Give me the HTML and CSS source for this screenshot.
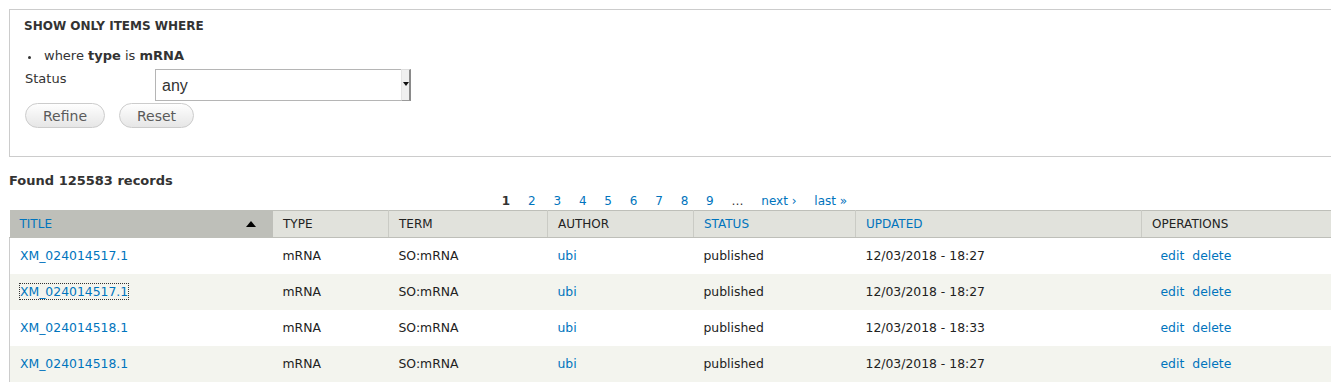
FILE: index.html
```html
<!DOCTYPE html>
<html lang="en">
<head>
    <meta charset="UTF-8">
    <meta name="viewport" content="width=device-width, initial-scale=1.0">
    <title>Content</title>
    <link rel="stylesheet" href="styles.css">
</head>
<body>
    <div class="page">
        <div class="filters">
            <div class="legend">Show only items where</div>
            <ul class="criteria">
                <li>where <b>type</b> is <b>mRNA</b></li>
            </ul>
            <div class="field">
                <label class="field-label" for="status">Status</label>
                <div class="select-wrap">
                    <select id="status" class="select">
                        <option>any</option>
                        <option>published</option>
                        <option>not published</option>
                    </select>
                    <span class="select-arrow"></span>
                </div>
            </div>
            <div class="actions">
                <button class="btn">Refine</button>
                <button class="btn">Reset</button>
            </div>
        </div>

        <div class="found">Found 125583 records</div>

        <ul class="pager">
            <li class="pager-current">1</li>
            <li><a href="#">2</a></li>
            <li><a href="#">3</a></li>
            <li><a href="#">4</a></li>
            <li><a href="#">5</a></li>
            <li><a href="#">6</a></li>
            <li><a href="#">7</a></li>
            <li><a href="#">8</a></li>
            <li><a href="#">9</a></li>
            <li>…</li>
            <li><a href="#">next ›</a></li>
            <li><a href="#">last »</a></li>
        </ul>

        <table class="records">
            <colgroup>
                <col style="width:263px">
                <col style="width:116px">
                <col style="width:159px">
                <col style="width:146px">
                <col style="width:162px">
                <col style="width:286px">
                <col style="width:199px">
            </colgroup>
            <thead>
                <tr>
                    <th class="active"><a href="#">Title</a>
                        <svg class="sort-icon" width="10" height="6" viewBox="0 0 10 6"><path d="M0 6 L5 0 L10 6 Z" fill="#000"/></svg>
                    </th>
                    <th>Type</th>
                    <th>Term</th>
                    <th>Author</th>
                    <th><a href="#">Status</a></th>
                    <th><a href="#">Updated</a></th>
                    <th>Operations</th>
                </tr>
            </thead>
            <tbody>
                <tr>
                    <td><a href="#">XM_024014517.1</a></td>
                    <td>mRNA</td>
                    <td>SO:mRNA</td>
                    <td><a href="#">ubi</a></td>
                    <td>published</td>
                    <td>12/03/2018 - 18:27</td>
                    <td class="ops"><a href="#">edit</a><a href="#">delete</a></td>
                </tr>
                <tr class="even">
                    <td><a href="#" class="focused">XM_024014517.1</a></td>
                    <td>mRNA</td>
                    <td>SO:mRNA</td>
                    <td><a href="#">ubi</a></td>
                    <td>published</td>
                    <td>12/03/2018 - 18:27</td>
                    <td class="ops"><a href="#">edit</a><a href="#">delete</a></td>
                </tr>
                <tr>
                    <td><a href="#">XM_024014518.1</a></td>
                    <td>mRNA</td>
                    <td>SO:mRNA</td>
                    <td><a href="#">ubi</a></td>
                    <td>published</td>
                    <td>12/03/2018 - 18:33</td>
                    <td class="ops"><a href="#">edit</a><a href="#">delete</a></td>
                </tr>
                <tr class="even">
                    <td><a href="#">XM_024014518.1</a></td>
                    <td>mRNA</td>
                    <td>SO:mRNA</td>
                    <td><a href="#">ubi</a></td>
                    <td>published</td>
                    <td>12/03/2018 - 18:27</td>
                    <td class="ops"><a href="#">edit</a><a href="#">delete</a></td>
                </tr>
            </tbody>
        </table>
    </div>
</body>
</html>
```

FILE: styles.css
```css
* {
    box-sizing: border-box;
}

body {
    margin: 0;
    overflow: hidden;
    font-family: "DejaVu Sans", Verdana, sans-serif;
    font-size: 13px;
    line-height: 18px;
    color: #333;
    background: #fff;
}

a {
    color: #0074bd;
    text-decoration: none;
}

.page {
    width: 1340px;
    padding: 9px 0 0 9px;
}

/* exposed filters */
.filters {
    border: 1px solid #ccc;
    border-right: 0;
    padding: 7px 0 28px 15px;
}

.legend {
    margin-left: -1px;
    font-size: 12px;
    font-weight: bold;
    text-transform: uppercase;
    color: #333;
}

.criteria {
    list-style: none;
    margin: 12px 0 0 0;
    padding: 0;
}

.criteria li {
    position: relative;
    padding-left: 19px;
}

.criteria li::before {
    content: "";
    position: absolute;
    left: 3px;
    top: 9px;
    width: 3px;
    height: 3px;
    border-radius: 50%;
    background: #333;
}

.field {
    display: flex;
    margin-top: 4px;
}

.field-label {
    width: 130px;
    padding-top: 1px;
}

.select-wrap {
    position: relative;
    width: 256px;
    height: 32px;
}

.select {
    appearance: none;
    -webkit-appearance: none;
    width: 100%;
    height: 100%;
    margin: 0;
    padding: 0 0 0 6px;
    border: 1px solid #b5b5b5;
    border-radius: 0;
    background: #fff;
    font-family: "Liberation Sans", Arial, sans-serif;
    font-size: 16px;
    color: #333;
}

.select-arrow {
    position: absolute;
    right: 0;
    top: 0;
    width: 10px;
    height: 32px;
    border-left: 1px solid #e4e4e4;
    border-right: 2px solid #8a8a8a;
    border-top: 1px solid #ddd;
    border-bottom: 1px solid #9a9a9a;
    background: #f0f0f0;
}

.select-arrow::after {
    content: "";
    position: absolute;
    left: 1px;
    top: 12px;
    border-left: 3px solid transparent;
    border-right: 3px solid transparent;
    border-top: 4px solid #111;
}

.actions {
    display: flex;
    gap: 14px;
    margin-top: 2px;
}

.btn {
    height: 25px;
    padding: 0 16px;
    border: 1px solid #ccc;
    border-radius: 20px;
    background: linear-gradient(#fefefe, #e6e6e6);
    font-family: "DejaVu Sans", Verdana, sans-serif;
    font-size: 14px;
    color: #5a5a5a;
    cursor: pointer;
}

.btn:first-child {
    width: 80px;
}

.btn:last-child {
    width: 75px;
}

.found {
    margin-top: 15px;
    font-weight: bold;
}

/* pager */
.pager {
    list-style: none;
    margin: 2px 0 0 0;
    padding: 0;
    display: flex;
    justify-content: center;
    gap: 17.8px;
    font-size: 12px;
}

.pager-current {
    font-weight: bold;
}

/* table */
.records {
    width: 1331px;
    table-layout: fixed;
    border-collapse: collapse;
    font-size: 12px;
}

.records th {
    height: 27px;
    padding: 0 10px;
    text-align: left;
    font-weight: normal;
    text-transform: uppercase;
    color: #222;
    background: #e1e2dc;
    border-top: 1px solid #bebfb9;
    border-bottom: 1px solid #bebfb9;
    border-right: 1px solid #cacbc5;
}

.records th.active {
    background: #bebfb9;
    border-right-color: #bebfb9;
}

.sort-icon {
    float: right;
    margin: 6px 6px 0 0;
}

.records td {
    height: 36px;
    padding: 0 10px;
    font-size: 12.4px;
    color: #222;
}

.records td:first-child {
    border-left: 1px solid #ccc;
}

.records tr.even td {
    background: #f3f4ee;
}

.focused {
    outline: 1px dotted #333;
}

.ops {
    padding-left: 19px !important;
}

.ops a + a {
    margin-left: 8px;
}
```
